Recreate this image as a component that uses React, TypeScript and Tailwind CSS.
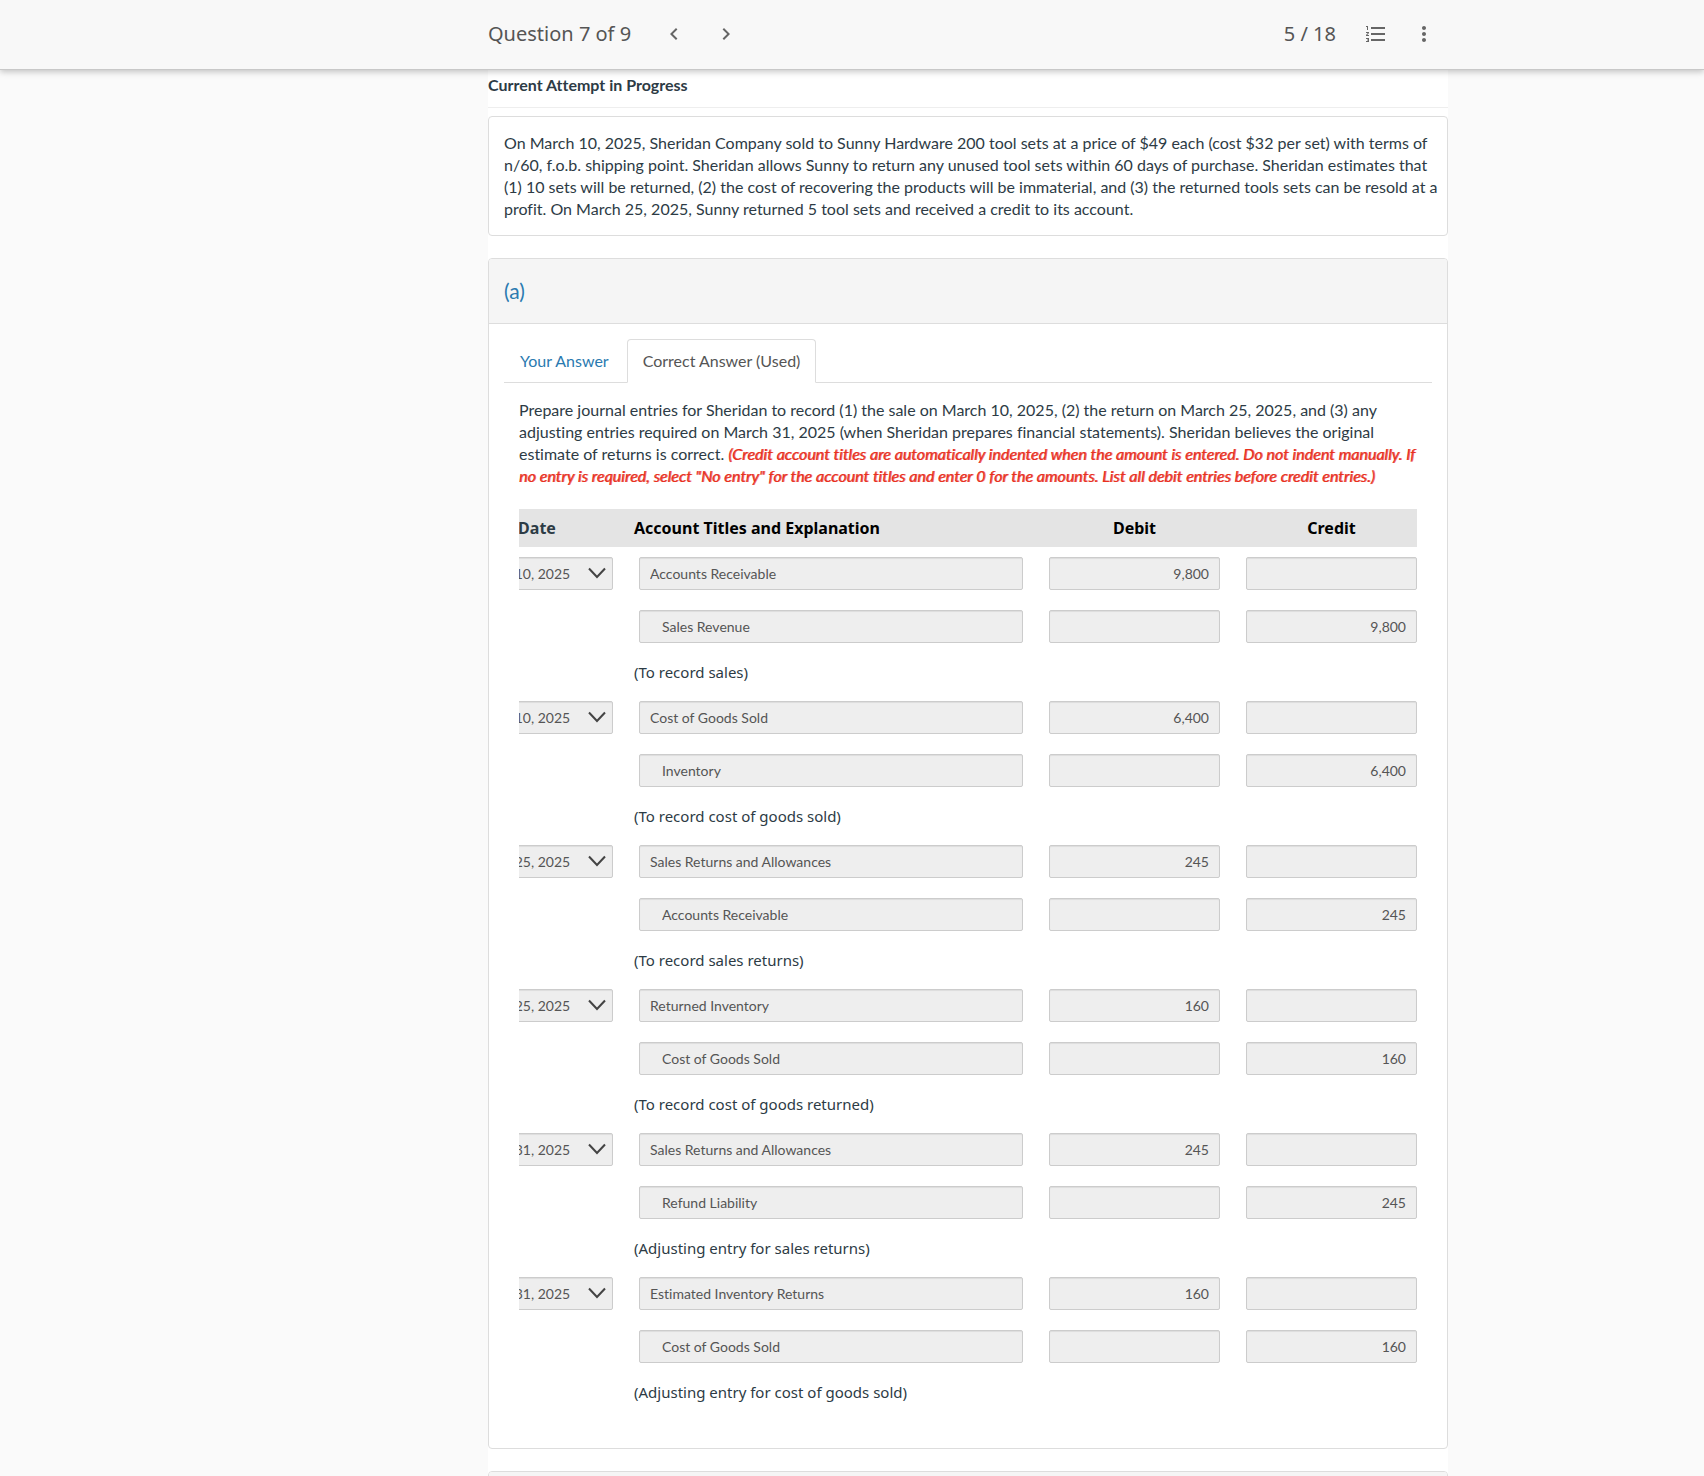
import React from 'react'
import { MdChevronLeft, MdChevronRight, MdFormatListNumbered, MdMoreVert } from 'react-icons/md'
import clsx from 'clsx'

interface JournalEntry {
  date: string
  debitAccount: string
  creditAccount: string
  amount: string
  note: string
}

const entries: JournalEntry[] = [
  {
    date: 'March 10, 2025',
    debitAccount: 'Accounts Receivable',
    creditAccount: 'Sales Revenue',
    amount: '9,800',
    note: '(To record sales)',
  },
  {
    date: 'March 10, 2025',
    debitAccount: 'Cost of Goods Sold',
    creditAccount: 'Inventory',
    amount: '6,400',
    note: '(To record cost of goods sold)',
  },
  {
    date: 'March 25, 2025',
    debitAccount: 'Sales Returns and Allowances',
    creditAccount: 'Accounts Receivable',
    amount: '245',
    note: '(To record sales returns)',
  },
  {
    date: 'March 25, 2025',
    debitAccount: 'Returned Inventory',
    creditAccount: 'Cost of Goods Sold',
    amount: '160',
    note: '(To record cost of goods returned)',
  },
  {
    date: 'March 31, 2025',
    debitAccount: 'Sales Returns and Allowances',
    creditAccount: 'Refund Liability',
    amount: '245',
    note: '(Adjusting entry for sales returns)',
  },
  {
    date: 'March 31, 2025',
    debitAccount: 'Estimated Inventory Returns',
    creditAccount: 'Cost of Goods Sold',
    amount: '160',
    note: '(Adjusting entry for cost of goods sold)',
  },
]

const fieldClass =
  'block h-[33px] w-full rounded-xs border border-[#ccc] bg-[#eee] text-sm text-[#555] opacity-100 shadow-[inset_0_1px_1px_rgba(0,0,0,0.075)]'

function IconButton({ label, children }: { label: string; children: React.ReactNode }) {
  return (
    <button type="button" aria-label={label} className="flex size-12 items-center justify-center text-[#666]">
      {children}
    </button>
  )
}

function TopBar() {
  return (
    <header className="relative z-10 shrink-0 border-b border-[#c8c8c8] bg-[#f8f8f8] shadow-[0_2px_6px_rgba(0,0,0,0.22)]">
      <div className="mx-auto flex h-[69px] max-w-[1192px] items-center pb-0.5 pl-[232px] font-['Noto_Sans',sans-serif] text-xl text-[#555]">
        <h1>Question 7 of 9</h1>
        <div className="ml-[19px] flex gap-1">
          <IconButton label="Previous question">
            <MdChevronLeft size={24} />
          </IconButton>
          <IconButton label="Next question">
            <MdChevronRight size={24} />
          </IconButton>
        </div>
        <span className="mr-4 ml-auto">5 / 18</span>
        <IconButton label="Question list">
          <MdFormatListNumbered size={24} />
        </IconButton>
        <IconButton label="More options">
          <MdMoreVert size={24} />
        </IconButton>
      </div>
    </header>
  )
}

function DateSelect({ date }: { date: string }) {
  return (
    <div className="relative">
      <select aria-label="Date" disabled defaultValue={date} className={clsx(fieldClass, 'appearance-none px-2.5')}>
        <option>{date}</option>
      </select>
      <svg viewBox="0 0 18 12" className="pointer-events-none absolute top-2.5 right-[7px] h-3 w-[18px]">
        <path d="M1 1.5 L9 10 L17 1.5" fill="none" stroke="#444" strokeWidth="2" />
      </svg>
    </div>
  )
}

function EntryRow({ date, account, debit, credit }: { date?: string; account: string; debit: string; credit: string }) {
  return (
    <tr>
      <td className="py-2.5">{date && <DateSelect date={date} />}</td>
      <td className="py-2.5 pl-[26px]">
        <input
          aria-label="Account title"
          disabled
          defaultValue={account}
          className={clsx(fieldClass, date ? 'px-2.5' : 'pr-2.5 pl-[22px]')}
        />
      </td>
      <td className="py-2.5 pl-[26px]">
        <input aria-label="Debit" disabled defaultValue={debit} className={clsx(fieldClass, 'px-2.5 text-right')} />
      </td>
      <td className="py-2.5 pl-[26px]">
        <input aria-label="Credit" disabled defaultValue={credit} className={clsx(fieldClass, 'px-2.5 text-right')} />
      </td>
    </tr>
  )
}

function JournalTable() {
  return (
    // the date column runs past the left edge and is cut off there
    <div className="mt-[22px] flex justify-end overflow-hidden">
      <table className="w-[calc(100%+58px)] shrink-0 table-fixed">
        <colgroup>
          <col className="w-[152px]" />
          <col />
          <col className="w-[197px]" />
          <col className="w-[197px]" />
        </colgroup>
        <thead>
          <tr className="bg-[#e4e4e4] font-['Noto_Sans',sans-serif] text-base/[18px] text-black">
            <th className="py-2.5 text-[#2d3b45]">Date</th>
            <th className="py-2.5 pl-[21px] text-left">Account Titles and Explanation</th>
            <th className="py-2.5 pl-[26px]">Debit</th>
            <th className="py-2.5 pl-[26px]">Credit</th>
          </tr>
        </thead>
        <tbody>
          {entries.map((entry, i) => (
            <React.Fragment key={i}>
              <EntryRow date={entry.date} account={entry.debitAccount} debit={entry.amount} credit="" />
              <EntryRow account={entry.creditAccount} debit="" credit={entry.amount} />
              <tr>
                <td />
                <td colSpan={3} className="py-2.5 pl-[21px] font-['Noto_Sans',sans-serif] text-[15px]/[18px]">
                  {entry.note}
                </td>
              </tr>
            </React.Fragment>
          ))}
        </tbody>
      </table>
    </div>
  )
}

function Tabs() {
  return (
    <div role="tablist" className="flex gap-0.5 border-b border-[#ddd]">
      <button
        type="button"
        role="tab"
        aria-selected={false}
        className="-mb-px rounded-t border border-transparent px-[15px] py-2.5 text-[#2a7ab0]"
      >
        Your Answer
      </button>
      <button
        type="button"
        role="tab"
        aria-selected={true}
        className="-mb-px rounded-t border border-[#ddd] border-b-white bg-white px-[15px] py-2.5 text-[#555]"
      >
        Correct Answer (Used)
      </button>
    </div>
  )
}

export default function App() {
  return (
    <div className="flex h-screen flex-col overflow-hidden bg-[#fafafa] font-[Lato,sans-serif] text-base/[22px] text-[#2d3b45] [font-variant-ligatures:none]">
      <TopBar />
      <div className="mx-auto min-h-0 w-full max-w-[1192px] flex-1 pl-[232px]">
        <main className="h-full overflow-hidden bg-white">
          <h2 className="border-b border-[#eee] pt-1 pb-[11px] font-bold">Current Attempt in Progress</h2>

          <section className="mt-2 rounded border border-[#ddd] py-[15px] pr-2 pl-[15px]">
            <p>
              On March 10, 2025, Sheridan Company sold to Sunny Hardware 200 tool sets at a price of $49 each (cost $32
              per set) with terms of n/60, f.o.b. shipping point. Sheridan allows Sunny to return any unused tool sets
              within 60 days of purchase. Sheridan estimates that (1) 10 sets will be returned, (2) the cost of
              recovering the products will be immaterial, and (3) the returned tools sets can be resold at a profit. On
              March 25, 2025, Sunny returned 5 tool sets and received a credit to its account.
            </p>
          </section>

          <section className="mt-[22px] overflow-hidden rounded border border-[#ddd]">
            <h3 className="border-b border-[#ddd] bg-[#f5f5f5] px-[15px] py-[21px] text-[21px]/[22px] text-[#2a7ab0]">
              (a)
            </h3>
            <div className="px-[15px] pt-[15px] pb-[37px]">
              <Tabs />
              <div className="px-[15px] pt-4">
                <p>
                  Prepare journal entries for Sheridan to record (1) the sale on March 10, 2025, (2) the return on March
                  25, 2025, and (3) any adjusting entries required on March 31, 2025 (when Sheridan prepares financial
                  statements). Sheridan believes the original estimate of returns is correct.{' '}
                  <em className="font-normal text-[#e8301f] [text-shadow:1px_0_0_rgba(232,48,31,0.7)]">
                    (Credit account titles are automatically indented when the amount is entered. Do not indent
                    manually. If no entry is required, select "No entry" for the account titles and enter 0 for the
                    amounts. List all debit entries before credit entries.)
                  </em>
                </p>
                <JournalTable />
              </div>
            </div>
          </section>

          {/* Next part, below the fold */}
          <section className="mt-[22px] overflow-hidden rounded border border-[#ddd]">
            <div className="h-16 bg-[#f5f5f5]" />
          </section>
        </main>
      </div>
    </div>
  )
}
